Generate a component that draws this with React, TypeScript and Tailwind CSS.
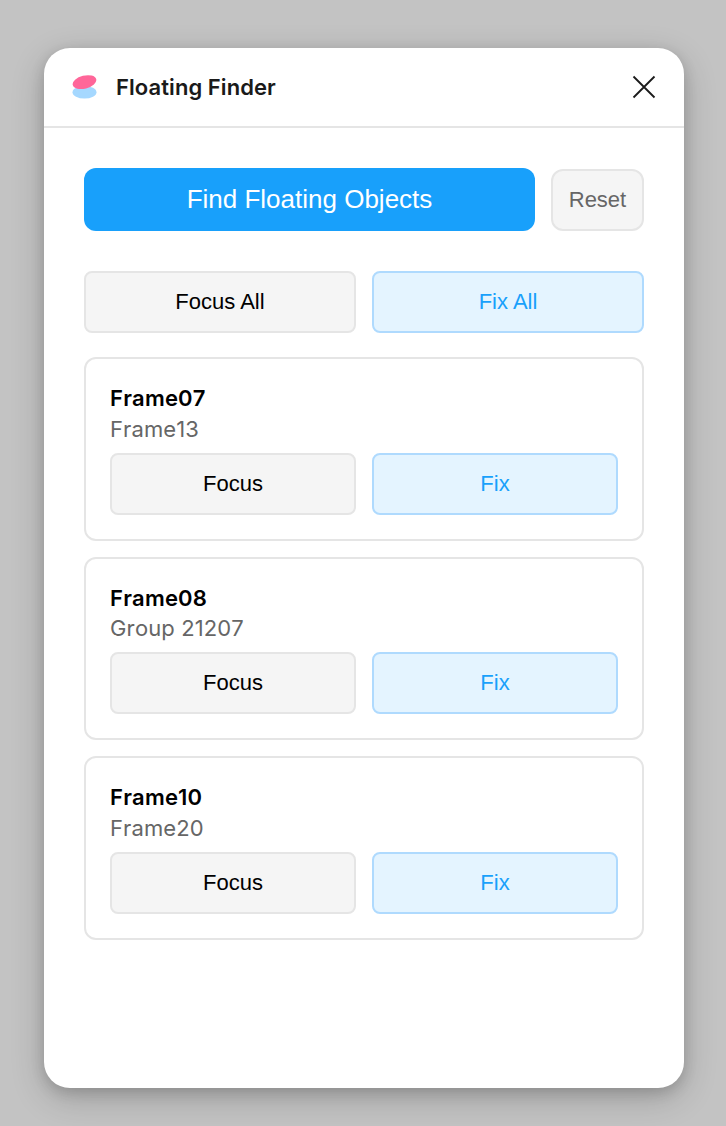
import React from 'react';

interface FloatingItem {
    id: string;
    name: string;
    parent: string;
}

const items: FloatingItem[] = [
    { id: '1', name: 'Frame07', parent: 'Frame13' },
    { id: '2', name: 'Frame08', parent: 'Group 21207' },
    { id: '3', name: 'Frame10', parent: 'Frame20' },
];

interface ActionButtonProps {
    label: string;
    primary?: boolean;
}

const ActionButton: React.FC<ActionButtonProps> = ({ label, primary }) => (
    <button
        className={`h-[62px] flex-1 rounded-lg border-2 pb-px text-[22px] ${
            primary ? 'border-[#afdafe] bg-[#e4f4ff] text-[#18a0fb]' : 'border-[#e5e5e5] bg-[#f5f5f5] text-black'
        }`}
    >
        {label}
    </button>
);

const ItemCard: React.FC<{ item: FloatingItem }> = ({ item }) => (
    <li className="h-[183.5px] rounded-xl border-2 border-[#e5e5e5] px-6 pt-6">
        <p className="font-[Inter] text-[22px] leading-[30.75px] font-semibold tracking-[0.2px] text-black [font-kerning:none]">{item.name}</p>
        <p className="font-[Inter] text-[22px] leading-[30.75px] tracking-[0.1px] text-[#666] [font-kerning:none]">{item.parent}</p>
        <div className="mt-2 flex gap-4">
            <ActionButton label="Focus" />
            <ActionButton label="Fix" primary />
        </div>
    </li>
);

const App: React.FC = () => {
    return (
        <div className="h-[1126px] bg-[#c3c3c3] px-11 pt-12 font-['Liberation_Sans',Arial,sans-serif]">
            <div className="h-[1040px] w-[640px] rounded-[26px] bg-white shadow-[0_10px_34px_rgba(0,0,0,0.2),0_4px_14px_rgba(0,0,0,0.15)]">
                <header className="flex h-20 items-center border-b-2 border-[#e5e5e5] px-7">
                    <svg className="h-[26px] w-[26px]" viewBox="0 0 26 26">
                        <ellipse cx="12.5" cy="18.3" rx="12" ry="6.3" fill="#a5d8ff" />
                        <ellipse cx="12.5" cy="8.1" rx="12.1" ry="6.5" transform="rotate(-14 12.5 8.1)" fill="#ff6699" />
                    </svg>
                    <h1 className="ml-[18px] flex-1 font-[Inter] text-[22px] font-semibold tracking-[0.07px] text-[#1a1a1a]">Floating Finder</h1>
                    <button aria-label="Close">
                        <svg className="h-6 w-6" viewBox="0 0 24 24" fill="none" stroke="#1a1a1a" strokeWidth={1.8}>
                            <path d="M1.5 1.5l21 21M22.5 1.5l-21 21" />
                        </svg>
                    </button>
                </header>

                <main className="px-10 pt-10">
                    <div className="flex items-end gap-4">
                        <button className="h-[63px] flex-1 rounded-xl bg-[#18a0fb] text-[26px] text-white">Find Floating Objects</button>
                        <button className="h-[62px] w-[93px] rounded-xl border-2 border-[#e5e5e5] bg-[#f5f5f5] pb-0.5 text-[22px] text-[#666]">Reset</button>
                    </div>
                    <div className="mt-10 flex gap-4">
                        <ActionButton label="Focus All" />
                        <ActionButton label="Fix All" primary />
                    </div>
                    <ul className="mt-6 flex flex-col gap-4">
                        {items.map((item) => (
                            <ItemCard key={item.id} item={item} />
                        ))}
                    </ul>
                </main>
            </div>
        </div>
    );
};

export default App;
